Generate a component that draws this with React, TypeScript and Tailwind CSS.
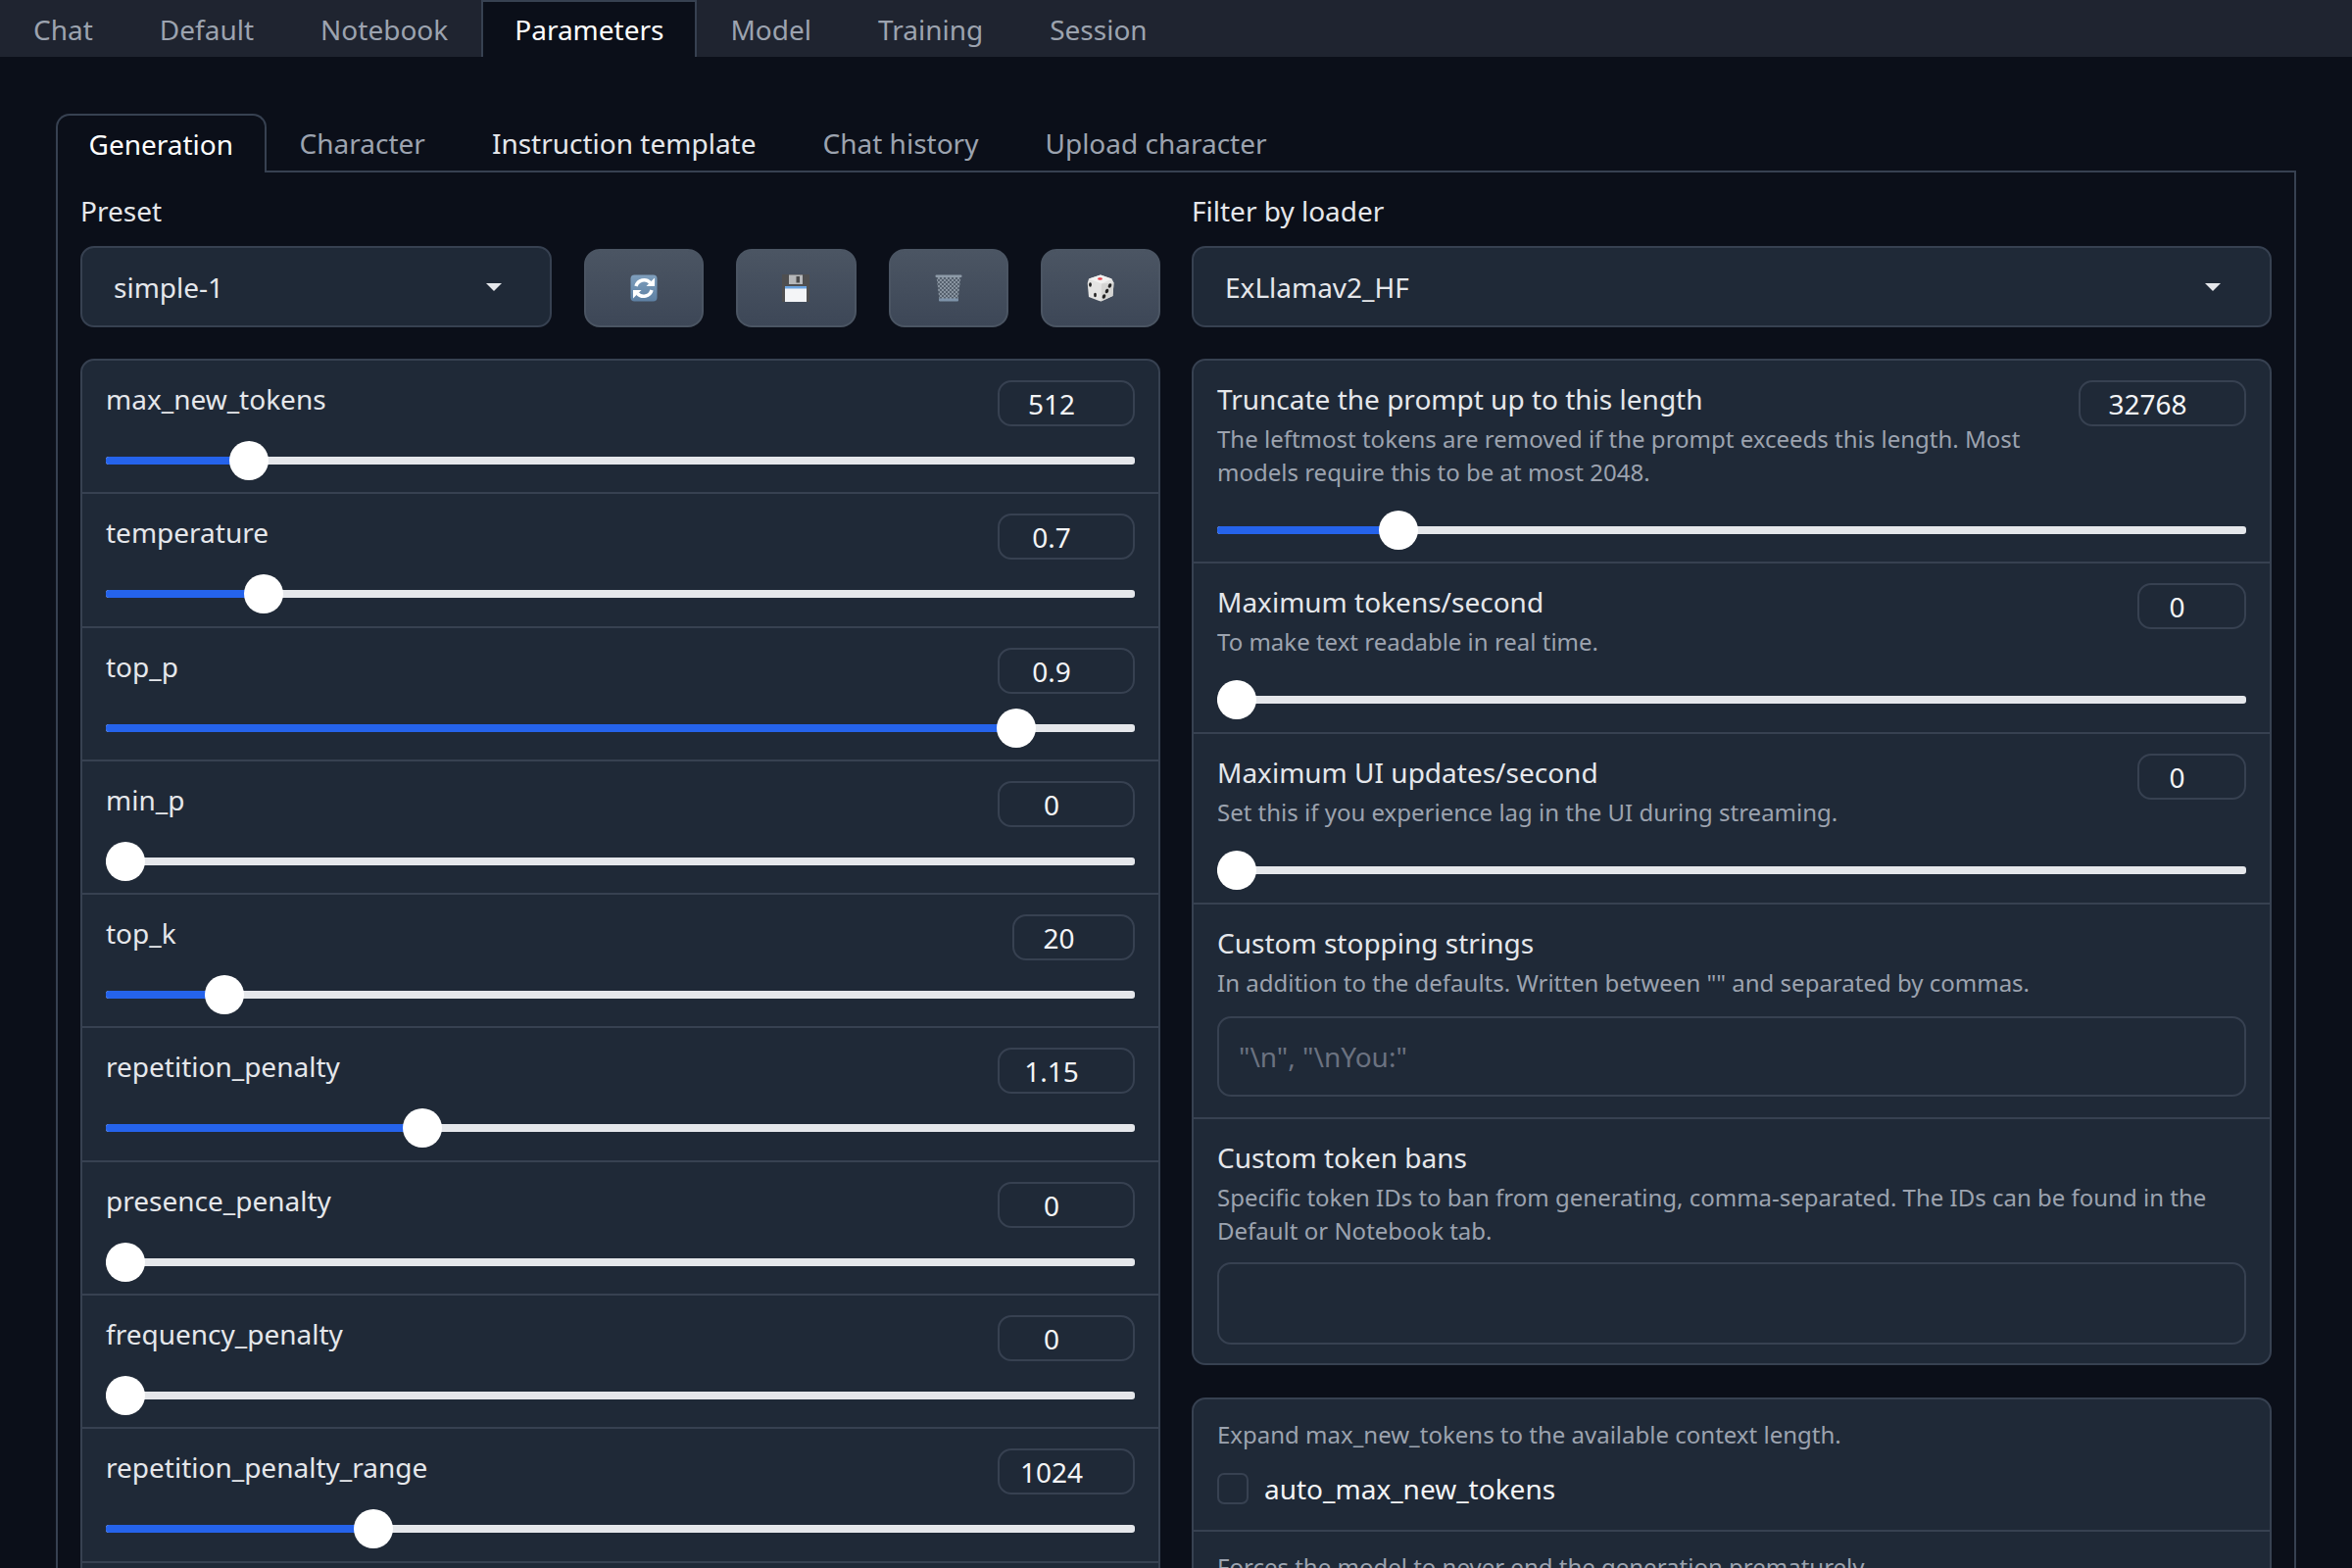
import React from 'react';

const mainTabs = ['Chat', 'Default', 'Notebook', 'Parameters', 'Model', 'Training', 'Session'];

const innerTabs = [
    { name: 'Generation', cls: 'text-white' },
    { name: 'Character', cls: 'text-[#9ca3af]' },
    { name: 'Instruction template', cls: 'text-[#e5e7eb]' },
    { name: 'Chat history', cls: 'text-[#9ca3af]' },
    { name: 'Upload character', cls: 'text-[#9ca3af]' },
];

const sliders = [
    { label: 'max_new_tokens', value: '512', pct: 12.5, wide: true },
    { label: 'temperature', value: '0.7', pct: 14, wide: true },
    { label: 'top_p', value: '0.9', pct: 90, wide: true },
    { label: 'min_p', value: '0', pct: 0, wide: true },
    { label: 'top_k', value: '20', pct: 10, wide: false },
    { label: 'repetition_penalty', value: '1.15', pct: 30, wide: true },
    { label: 'presence_penalty', value: '0', pct: 0, wide: true },
    { label: 'frequency_penalty', value: '0', pct: 0, wide: true },
    { label: 'repetition_penalty_range', value: '1024', pct: 25, wide: true },
];

const Slider = ({ pct }: { pct: number }) => (
    <div className="relative h-10 w-full">
        <div className="absolute inset-x-0 top-4 h-2 rounded-[3px] bg-[#e5e7eb]" />
        {pct > 0 && (
            <div
                className="absolute left-0 top-4 h-2 rounded-l-[3px] bg-[#2563eb]"
                style={{ width: `calc(20px + ${pct / 100} * (100% - 40px))` }}
            />
        )}
        <div
            className="absolute top-0 h-10 w-10 rounded-full bg-white"
            style={{ left: `calc(${pct / 100} * (100% - 40px))` }}
        />
    </div>
);

const NumberBox = ({ value, cls }: { value: string; cls: string }) => (
    <div className={`flex h-[47px] shrink-0 items-center justify-center rounded-[14px] border-2 border-[#374151] pr-[30px] pt-[1px] text-[28px] text-[#f3f4f6] ${cls}`}>
        {value}
    </div>
);

const Caret = () => (
    <svg width="16" height="8" viewBox="0 0 16 8" className="shrink-0">
        <path d="M0 0h16l-8 8z" fill="#e5e7eb" />
    </svg>
);

const RefreshIcon = () => (
    <svg width="28" height="28" viewBox="0 0 28 28">
        <defs>
            <linearGradient id="rf" x1="0" y1="0" x2="0" y2="1">
                <stop offset="0" stopColor="#7f9fbd" />
                <stop offset="1" stopColor="#5d80a3" />
            </linearGradient>
        </defs>
        <rect x="0.5" y="0.5" width="27" height="27" rx="4" fill="url(#rf)" />
        <path d="M6 12a8.5 8.5 0 0 1 14.5-3.5" fill="none" stroke="#fff" strokeWidth="3.5" />
        <path d="M16.5 12h8.5V3.5z" fill="#fff" />
        <path d="M22 16a8.5 8.5 0 0 1-14.5 3.5" fill="none" stroke="#fff" strokeWidth="3.5" />
        <path d="M11.5 16H3v8.5z" fill="#fff" />
    </svg>
);

const SaveIcon = () => (
    <svg width="28" height="28" viewBox="0 0 28 28">
        <rect x="0" y="0" width="28" height="28" fill="#4f4f50" />
        <rect x="7" y="0.5" width="14" height="9.5" fill="#b6b8ba" />
        <rect x="14.5" y="2" width="3.5" height="6.5" fill="#4a4a4b" />
        <rect x="3" y="12" width="22" height="16" fill="#f4f5f7" />
        <rect x="3" y="12" width="22" height="2.5" fill="#6ba4e0" />
    </svg>
);

const TrashIcon = () => (
    <svg width="28" height="28" viewBox="0 0 28 28">
        <defs>
            <pattern id="mesh" width="4" height="4" patternUnits="userSpaceOnUse">
                <rect width="4" height="4" fill="#56616e" />
                <path d="M0 0l4 4M4 0L0 4" stroke="#8f9aa6" strokeWidth="0.9" />
            </pattern>
        </defs>
        <path d="M1.5 2h25l-3 24h-19z" fill="url(#mesh)" />
        <rect x="0.5" y="0.5" width="27" height="2.5" rx="1" fill="#8e9ba8" />
        <rect x="4" y="24.5" width="20" height="3" rx="1" fill="#7e93aa" />
    </svg>
);

const DiceIcon = () => (
    <svg width="28" height="28" viewBox="0 0 28 28">
        <path d="M14 0.5l11.5 4 2 4-1 13.5-12 5.5-2-.5L2 23 .7 9 2 4.5z" fill="#e4e4e3" />
        <path d="M14 0.5l11.5 4L15 9.5 2 4.5z" fill="#f2f2f1" />
        <path d="M15 9.5l12.5-1-1 13.5-12 5.5z" fill="#d4d4d2" />
        <ellipse cx="13.5" cy="4.5" rx="2.4" ry="1.2" fill="#e8414a" />
        <ellipse cx="3.5" cy="10.5" rx="1.4" ry="2.2" fill="#222" />
        <ellipse cx="8.5" cy="21" rx="1.4" ry="2.2" fill="#222" />
        <ellipse cx="23.5" cy="11.5" rx="1.7" ry="2.4" transform="rotate(20 23.5 11.5)" fill="#222" />
        <ellipse cx="20.5" cy="17" rx="1.7" ry="2.4" transform="rotate(20 20.5 17)" fill="#222" />
        <ellipse cx="17.5" cy="22.5" rx="1.7" ry="2.4" transform="rotate(20 17.5 22.5)" fill="#222" />
    </svg>
);

const toolButtons = [<RefreshIcon key="r" />, <SaveIcon key="s" />, <TrashIcon key="t" />, <DiceIcon key="d" />];

const Dropdown = ({ value, cls }: { value: string; cls: string }) => (
    <div className={`flex h-[83px] items-center justify-between rounded-[14px] border-2 border-[#374151] bg-[#1f2937] pl-[32px] text-[28px] text-[#e5e7eb] ${cls}`}>
        <span>{value}</span>
        <Caret />
    </div>
);

const InfoRow = ({ label, info, value, boxCls, pct, gap, first }: { label: string; info: string; value: string; boxCls: string; pct: number; gap: string; first?: boolean }) => (
    <div className={`px-6 pb-[12.6px] pt-5 ${first ? '' : 'border-t-2 border-[#374151]'}`}>
        <div className="flex items-start justify-between gap-[50px]">
            <div>
                <div className="text-[28px] leading-[39px] text-[#e5e7eb]">{label}</div>
                <div className="mt-1 text-[24px] leading-[34px] text-[#9ca3af]">{info}</div>
            </div>
            <NumberBox value={value} cls={boxCls} />
        </div>
        <div className={gap}><Slider pct={pct} /></div>
    </div>
);

export default function App() {
    return (
        <div className="h-[1600px] w-[2400px] overflow-hidden bg-[#0b0f19] [font-family:'Noto_Sans',sans-serif]">
            <nav className="flex h-[58px] bg-[#1f2430]">
                {mainTabs.map(tab => tab === 'Parameters' ? (
                    <div key={tab} className="flex h-[58px] items-center border-x-2 border-t-2 border-[#374151] bg-[#0b0f19] px-[32px] text-[28px] text-white">{tab}</div>
                ) : (
                    <div key={tab} className="flex h-[58px] items-center px-[34px] pt-[2px] text-[28px] text-[#9ca3af]">{tab}</div>
                ))}
            </nav>

            <div className="mx-[57px] mt-[58px]">
                <div className="relative z-10 flex h-[60px]">
                    {innerTabs.map((tab, i) => i === 0 ? (
                        <div key={tab.name} className={`flex h-[60px] items-center rounded-t-[14px] border-x-2 border-t-2 border-[#374151] bg-[#0b0f19] px-[31.5px] text-[28px] ${tab.cls}`}>{tab.name}</div>
                    ) : (
                        <div key={tab.name} className={`flex h-[60px] items-center px-[34px] text-[28px] ${tab.cls}`}>{tab.name}</div>
                    ))}
                </div>
                <div className="-mt-[2px] grid grid-cols-[1102px_1102px] gap-[32px] border-2 border-[#374151] px-[23px] pt-5">
                    <div>
                        <div className="text-[28px] leading-[39px] text-[#e5e7eb]">Preset</div>
                        <div className="mt-4 flex items-end gap-[33px]">
                            <Dropdown value="simple-1" cls="w-[481px] shrink-0 pr-[49px]" />
                            {toolButtons.map((icon, i) => (
                                <button key={i} className="flex h-[80px] flex-1 items-center justify-center rounded-[16px] border-2 border-[#4b5563] bg-gradient-to-b from-[#4b5563] to-[#3d4757]">{icon}</button>
                            ))}
                        </div>
                        <div className="mt-[32px] overflow-hidden rounded-[14px] border-2 border-[#374151] bg-[#1f2937]">
                            {sliders.map((s, i) => (
                                <div key={s.label} className={`px-6 pb-[12.3px] pt-5 ${i ? 'border-t-2 border-[#374151]' : ''}`}>
                                    <div className="flex items-start justify-between">
                                        <span className="text-[28px] leading-[39px] text-[#e5e7eb]">{s.label}</span>
                                        <NumberBox value={s.value} cls={s.wide ? 'w-[140px]' : 'w-[125px]'} />
                                    </div>
                                    <div className="mt-[15px]"><Slider pct={s.pct} /></div>
                                </div>
                            ))}
                            <div className="h-10 border-t-2 border-[#374151]" />
                        </div>
                    </div>

                    <div>
                        <div className="text-[28px] leading-[39px] text-[#e5e7eb]">Filter by loader</div>
                        <div className="mt-4">
                            <Dropdown value="ExLlamav2_HF" cls="pr-[50px]" />
                        </div>
                        <div className="mt-[32px] overflow-hidden rounded-[14px] border-2 border-[#374151] bg-[#1f2937]">
                            <InfoRow first label="Truncate the prompt up to this length" info="The leftmost tokens are removed if the prompt exceeds this length. Most models require this to be at most 2048." value="32768" boxCls="w-[171px]" pct={16.3} gap="mt-[21.6px]" />
                            <InfoRow label="Maximum tokens/second" info="To make text readable in real time." value="0" boxCls="w-[111px]" pct={0} gap="mt-[22.3px]" />
                            <InfoRow label="Maximum UI updates/second" info="Set this if you experience lag in the UI during streaming." value="0" boxCls="w-[111px]" pct={0} gap="mt-[22.3px]" />
                            <div className="border-t-2 border-[#374151] px-6 pb-[21px] pt-5">
                                <div className="text-[28px] leading-[39px] text-[#e5e7eb]">Custom stopping strings</div>
                                <div className="mt-1 text-[24px] leading-[34px] text-[#9ca3af]">In addition to the defaults. Written between "" and separated by commas.</div>
                                <div className="mt-[17px] flex h-[82px] items-center rounded-[14px] border-2 border-[#374151] pl-[20px] text-[28px] text-[#6b7280]">"\n", "\nYou:"</div>
                            </div>
                            <div className="border-t-2 border-[#374151] px-6 pb-[19px] pt-5">
                                <div className="text-[28px] leading-[39px] text-[#e5e7eb]">Custom token bans</div>
                                <div className="mt-1 text-[24px] leading-[34px] text-[#9ca3af]">Specific token IDs to ban from generating, comma-separated. The IDs can be found in the Default or Notebook tab.</div>
                                <div className="mt-[15px] h-[84px] rounded-[14px] border-2 border-[#374151]" />
                            </div>
                        </div>
                        <div className="mt-[33px] rounded-t-[14px] border-2 border-[#374151] bg-[#1f2937]">
                            <div className="px-6 pb-[26px] pt-[19px]">
                                <div className="text-[24px] leading-[34px] text-[#9ca3af]">Expand max_new_tokens to the available context length.</div>
                                <div className="mt-[22px] flex h-8 items-center gap-4">
                                    <div className="h-8 w-8 rounded-[7px] border-2 border-[#374151]" />
                                    <span className="text-[28px] text-[#f3f4f6]">auto_max_new_tokens</span>
                                </div>
                            </div>
                            <div className="border-t-2 border-[#374151] px-6 pb-[26px] pt-[19px]">
                                <div className="text-[24px] leading-[34px] text-[#9ca3af]">Forces the model to never end the generation prematurely.</div>
                                <div className="mt-[22px] h-8" />
                            </div>
                        </div>
                    </div>
                </div>
            </div>
        </div>
    );
}
